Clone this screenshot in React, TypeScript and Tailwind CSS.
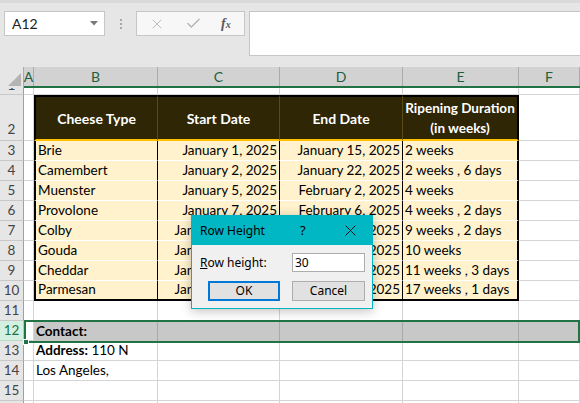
import { X, Check } from 'lucide-react'

const rows = [
  ['Brie', 'January 1, 2025', 'January 15, 2025', '2 weeks'],
  ['Camembert', 'January 2, 2025', 'January 22, 2025', '2 weeks , 6 days'],
  ['Muenster', 'January 5, 2025', 'February 2, 2025', '4 weeks'],
  ['Provolone', 'January 7, 2025', 'February 6, 2025', '4 weeks , 2 days'],
  ['Colby', 'January 10, 2025', 'March 16, 2025', '9 weeks , 2 days'],
  ['Gouda', 'January 12, 2025', 'March 23, 2025', '10 weeks'],
  ['Cheddar', 'January 15, 2025', 'April 6, 2025', '11 weeks , 3 days'],
  ['Parmesan', 'January 20, 2025', 'May 20, 2025', '17 weeks , 1 days'],
]

const cols = [
  { letter: 'A', w: 'w-[10px]' },
  { letter: 'B', w: 'w-[124px]' },
  { letter: 'C', w: 'w-[122px]' },
  { letter: 'D', w: 'w-[123px]' },
  { letter: 'E', w: 'w-[116px]' },
  { letter: 'F', w: 'flex-1' },
]

const grid = 'border-r border-b border-[#d4d4d4]'

function RowHead({ n, active, cls = '' }: { n: number; active?: boolean; cls?: string }) {
  return (
    <div
      className={`w-[24px] shrink-0 flex items-end justify-center leading-[19px] text-[13.5px] border-r border-b ${
        active
          ? 'bg-[#d3f0e0] text-[#217346] border-r-[#9fd5b7] border-b-[#b9dcc8]'
          : 'bg-[#e6e6e6] text-[#444] border-r-[#a0a0a0] border-b-[#c8c8c8]'
      } ${cls}`}
    >
      {n}
    </div>
  )
}

function PlainRow({ n, children }: { n: number; children?: React.ReactNode }) {
  return (
    <div className="flex h-[20px]">
      <RowHead n={n} />
      {children ?? (
        <>
          <div className={`w-[10px] ${grid}`} />
          <div className={`w-[124px] ${grid}`} />
          <div className={`w-[122px] ${grid}`} />
          <div className={`w-[123px] ${grid}`} />
          <div className={`w-[116px] ${grid}`} />
          <div className={`flex-1 ${grid}`} />
        </>
      )}
    </div>
  )
}

export default function App() {
  return (
    <div className="relative w-[580px] h-[403px] overflow-hidden bg-white font-['Lato','Liberation_Sans',sans-serif] text-black">
      {/* formula bar area */}
      <div className="h-[67px] bg-[#e6e6e6] border-t-[3px] border-[#dadada]">
        <div className="flex items-start pt-[8px] pl-[4px]">
          <div className="w-[101px] h-[25px] bg-white border border-[#c6c6c6] flex items-center pl-[7px] pr-[6px]">
            <span className="text-[14px] text-[#222] flex-1">A12</span>
            <svg width="8" height="5" viewBox="0 0 8 5">
              <polygon points="0,0 8,0 4,4.5" fill="#7a7a7a" />
            </svg>
          </div>
          <div className="w-[31px] h-[25px] flex flex-col items-center justify-center gap-[2px]">
            <div className="w-[2px] h-[2px] bg-[#a8a8a8]" />
            <div className="w-[2px] h-[2px] bg-[#a8a8a8]" />
            <div className="w-[2px] h-[2px] bg-[#a8a8a8]" />
          </div>
          <div className="w-[109px] h-[25px] bg-[#f7f7f7] border border-[#c6c6c6] flex items-center pl-[12px]">
            <X size={16} strokeWidth={1.3} className="text-[#b2b2b2]" />
            <Check size={17} strokeWidth={1.8} className="text-[#b2b2b2] ml-[20px]" />
            <span className="ml-[19px] italic font-bold font-['Liberation_Serif',serif] text-[14px] text-[#5a5a5a] leading-none">
              f<span className="text-[10px]">x</span>
            </span>
          </div>
          <div className="ml-[4px] flex-1 h-[45px] bg-white border border-r-0 border-[#c6c6c6]" />
        </div>
      </div>

      {/* column headers */}
      <div className="flex h-[21px]">
        <div className="w-[24px] shrink-0 bg-[#e6e6e6] border-r border-[#ababab] flex items-end justify-end pr-[2px] pb-[2px]">
          <svg width="13" height="13" viewBox="0 0 13 13">
            <polygon points="13,0 13,13 0,13" fill="#b4b4b4" />
          </svg>
        </div>
        <div className="flex flex-1 bg-[#d2d2d2] border-b-2 border-[#217346]">
          {cols.map((c) => (
            <div
              key={c.letter}
              className={`${c.w} border-r border-[#ababab] flex items-center justify-center text-[14px] text-[#1f5f3c]`}
            >
              {c.letter}
            </div>
          ))}
        </div>
      </div>

      {/* row 1 */}
      <div className="flex h-[7px] overflow-hidden">
        <div className="w-[24px] shrink-0 bg-[#e6e6e6] border-r border-b border-r-[#a0a0a0] border-b-[#c8c8c8] flex justify-center overflow-hidden">
          <span className="text-[13.5px] text-[#444] leading-[19px] -mt-[12px]">1</span>
        </div>
        <div className={`w-[10px] ${grid}`} />
        <div className={`w-[124px] ${grid}`} />
        <div className={`w-[122px] ${grid}`} />
        <div className={`w-[123px] ${grid}`} />
        <div className={`w-[116px] ${grid}`} />
        <div className={`flex-1 ${grid}`} />
      </div>

      {/* row 2: table header */}
      <div className="flex h-[46px]">
        <RowHead n={2} cls="pb-[1px]" />
        <div className={`w-[10px] ${grid}`} />
        <div className="w-[124px] bg-[#2e2605] border-l-2 border-l-black border-t-2 border-t-black border-b-2 border-b-[#ffc000] border-r border-r-[#5a4b13] flex items-center justify-center text-white font-bold text-[14px]">
          Cheese Type
        </div>
        <div className="w-[122px] bg-[#2e2605] border-t-2 border-t-black border-b-2 border-b-[#ffc000] border-r border-r-[#5a4b13] flex items-center justify-center text-white font-bold text-[14px]">
          Start Date
        </div>
        <div className="w-[123px] bg-[#2e2605] border-t-2 border-t-black border-b-2 border-b-[#ffc000] border-r border-r-[#5a4b13] flex items-center justify-center text-white font-bold text-[14px]">
          End Date
        </div>
        <div className="w-[116px] bg-[#2e2605] border-t-2 border-t-black border-b-2 border-b-[#ffc000] border-r-2 border-r-black flex flex-col items-center justify-center text-white font-bold text-[13.5px] leading-[20px]">
          <span>Ripening Duration</span>
          <span>(in weeks)</span>
        </div>
        <div className={`flex-1 ${grid}`} />
      </div>

      {/* rows 3-10: data */}
      {rows.map((r, i) => {
        const bottom = i < rows.length - 1 ? 'border-b border-b-white' : 'border-b-2 border-b-black'
        return (
          <div key={r[0]} className="flex h-[20px]">
            <RowHead n={i + 3} />
            <div className={`w-[10px] ${grid}`} />
            <div className={`w-[124px] bg-[#fff2cc] ${bottom} border-l-2 border-l-black border-r border-r-black flex items-end pl-[2px] leading-[19px] text-[13.5px] whitespace-nowrap overflow-hidden`}>
              {r[0]}
            </div>
            <div className={`w-[122px] bg-[#fff2cc] ${bottom} border-r border-r-black flex items-end justify-end pr-[2px] leading-[19px] text-[13.5px] whitespace-nowrap overflow-hidden`}>
              {r[1]}
            </div>
            <div className={`w-[123px] bg-[#fff2cc] ${bottom} border-r border-r-black flex items-end justify-end pr-[2px] leading-[19px] text-[13.5px] whitespace-nowrap overflow-hidden`}>
              {r[2]}
            </div>
            <div className={`w-[116px] bg-[#fff2cc] ${bottom} border-r-2 border-r-black flex items-end pl-[2px] leading-[19px] text-[13.5px] whitespace-nowrap overflow-hidden`}>
              {r[3]}
            </div>
            <div className={`flex-1 ${grid}`} />
          </div>
        )
      })}

      <PlainRow n={11} />

      {/* row 12: selected */}
      <div className="relative flex h-[20px]">
        <RowHead n={12} active />
        <div className={`w-[10px] ${grid}`} />
        <div className="w-[124px] bg-[#c8c8c8] border-r border-[#a9a9a9] flex items-end pl-[2px] leading-[19px] text-[13.5px] font-bold">
          Contact:
        </div>
        <div className="w-[122px] bg-[#c8c8c8] border-r border-[#a9a9a9]" />
        <div className="w-[123px] bg-[#c8c8c8] border-r border-[#a9a9a9]" />
        <div className="w-[116px] bg-[#c8c8c8] border-r border-[#a9a9a9]" />
        <div className="flex-1 bg-[#c8c8c8]" />
        <div className="absolute left-[24px] right-0 -top-[1px] -bottom-[2px] border-2 border-[#217346] pointer-events-none" />
        <div className="absolute left-[23px] -bottom-[4px] w-[6px] h-[6px] bg-[#217346] border border-white" />
      </div>

      <PlainRow n={13}>
        <div className={`w-[10px] ${grid}`} />
        <div className={`w-[124px] ${grid} flex items-end pl-[2px] leading-[19px] text-[13.5px] whitespace-nowrap`}>
          <span className="font-bold">Address:</span>&nbsp;110 N
        </div>
        <div className={`w-[122px] ${grid}`} />
        <div className={`w-[123px] ${grid}`} />
        <div className={`w-[116px] ${grid}`} />
        <div className={`flex-1 ${grid}`} />
      </PlainRow>
      <PlainRow n={14}>
        <div className={`w-[10px] ${grid}`} />
        <div className={`w-[124px] ${grid} flex items-end pl-[2px] leading-[19px] text-[13.5px] whitespace-nowrap`}>
          Los Angeles,
        </div>
        <div className={`w-[122px] ${grid}`} />
        <div className={`w-[123px] ${grid}`} />
        <div className={`w-[116px] ${grid}`} />
        <div className={`flex-1 ${grid}`} />
      </PlainRow>
      <PlainRow n={15} />
      <PlainRow n={16} />

      {/* Row Height dialog */}
      <div className="absolute left-[191px] top-[215px] w-[182px] h-[94px] bg-[#f0f0f0] border border-[#00b4c3] shadow-[0_2px_10px_rgba(0,0,0,0.25)] font-['Noto_Sans','Open_Sans',sans-serif] text-[12px] flex flex-col">
        <div className="h-[29px] bg-[#00b7c3] flex items-center pl-[8px] pr-[16px]">
          <span className="w-[100px]">Row Height</span>
          <span className="text-[13px]">?</span>
          <span className="flex-1" />
          <svg width="11" height="11" viewBox="0 0 11 11">
            <path d="M0.5 0.5 L10.5 10.5 M10.5 0.5 L0.5 10.5" stroke="#111" strokeWidth="1" />
          </svg>
        </div>
        <div className="flex flex-col pt-[8px] pl-[8px]">
          <div className="flex items-center h-[19px]">
            <span className="w-[92px]">
              <span className="underline">R</span>ow height:
            </span>
            <div className="w-[73px] h-[19px] bg-white border border-[#adadad] flex items-center pl-[2px]">30</div>
          </div>
          <div className="flex mt-[9px] pl-[8px] gap-[12px]">
            <div className="w-[72px] h-[20px] bg-[#e1e1e1] border-2 border-[#0078d7] flex items-center justify-center">
              OK
            </div>
            <div className="w-[73px] h-[20px] bg-[#e1e1e1] border border-[#adadad] flex items-center justify-center">
              Cancel
            </div>
          </div>
        </div>
      </div>
    </div>
  )
}
